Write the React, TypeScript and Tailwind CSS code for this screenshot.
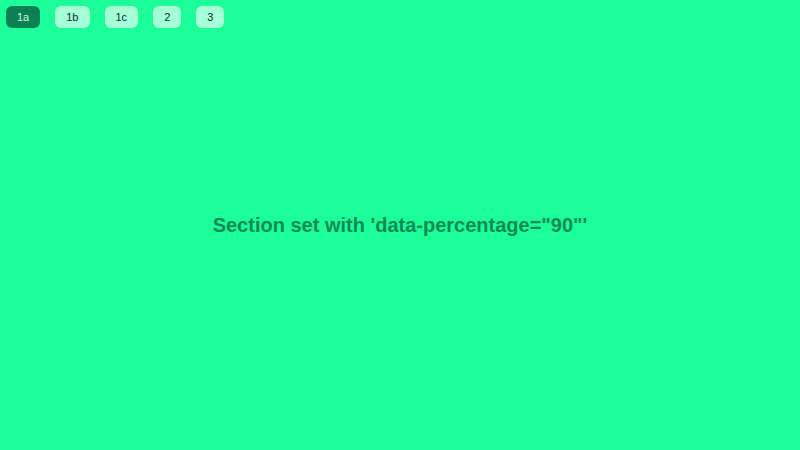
const tabs = ['1a', '1b', '1c', '2', '3']

export default function App() {
  const active = '1a'
  return (
    <div className="relative h-[450px] w-full bg-[#1cff98] font-['Liberation_Sans',Arial,sans-serif]">
      {/* Section nav */}
      <nav className="absolute left-[6px] top-[6px] flex gap-[15px]">
        {tabs.map((t) => (
          <button
            key={t}
            className={`h-[22px] rounded-[6px] px-[11px] text-[11px] leading-none ${
              t === active ? 'bg-[#0b8051] text-[#cdf7e4]' : 'bg-[#a5ffd7] text-[#0a2e1f]'
            }`}
          >
            {t}
          </button>
        ))}
      </nav>

      <section className="flex h-full items-center justify-center">
        <h1 className="text-[20px] font-bold text-[#118a55]">
          Section set with 'data-percentage="90"'
        </h1>
      </section>
    </div>
  )
}
